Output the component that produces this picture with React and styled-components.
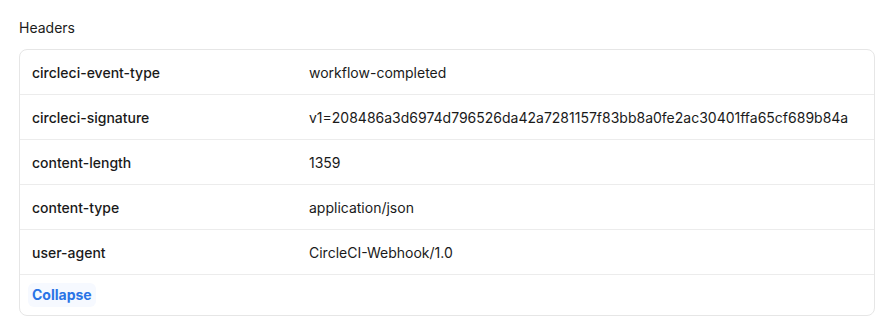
import React, { useState } from 'react'
import styled, { createGlobalStyle } from 'styled-components'

const GlobalStyle = createGlobalStyle`
    body {
        margin: 0;
        background: #ffffff;
        font-family: Inter, "Noto Sans", sans-serif;
        color: #1c1c1c;
    }
`

const Section = styled.section`
    padding: 18px 21px 0 19px;
`

const Title = styled.h3`
    margin: 0 0 11px;
    font-size: 14px;
    font-weight: 400;
    line-height: 20px;
    color: #1c1c1c;
`

const Card = styled.div`
    border: 1px solid #e6e6e6;
    border-radius: 8px;
    overflow: hidden;
`

const Row = styled.div`
    display: grid;
    grid-template-columns: 277px 1fr;
    align-items: center;
    height: 44px;
    border-bottom: 1px solid #ececec;
    font-size: 14px;
`

const Cell = styled.div`
    padding: 0 12px;
    font-weight: ${(p) => (p.$key ? 500 : 400)};
    color: #1a1a1a;
    white-space: nowrap;
`

const Footer = styled.div`
    padding: 8px;
    height: 40px;
    box-sizing: border-box;
    display: flex;
    align-items: center;
`

const LinkButton = styled.button`
    border: 0;
    background: #f6f9ff;
    border-radius: 6px;
    padding: 2px 4px;
    font-family: inherit;
    font-size: 14px;
    font-weight: 700;
    line-height: 20px;
    color: #2a74e6;
    cursor: pointer;
`

const headers = [
    ['circleci-event-type', 'workflow-completed'],
    ['circleci-signature', 'v1=208486a3d6974d796526da42a7281157f83bb8a0fe2ac30401ffa65cf689b84a'],
    ['content-length', '1359'],
    ['content-type', 'application/json'],
    ['user-agent', 'CircleCI-Webhook/1.0'],
]

export default function App() {
    const [open, setOpen] = useState(true)

    return (
        <Section>
            <GlobalStyle />
            <Title>Headers</Title>
            <Card>
                {open &&
                    headers.map(([name, value]) => (
                        <Row key={name}>
                            <Cell $key>{name}</Cell>
                            <Cell>{value}</Cell>
                        </Row>
                    ))}
                <Footer>
                    <LinkButton onClick={() => setOpen(!open)}>
                        {open ? 'Collapse' : 'Expand'}
                    </LinkButton>
                </Footer>
            </Card>
        </Section>
    )
}
